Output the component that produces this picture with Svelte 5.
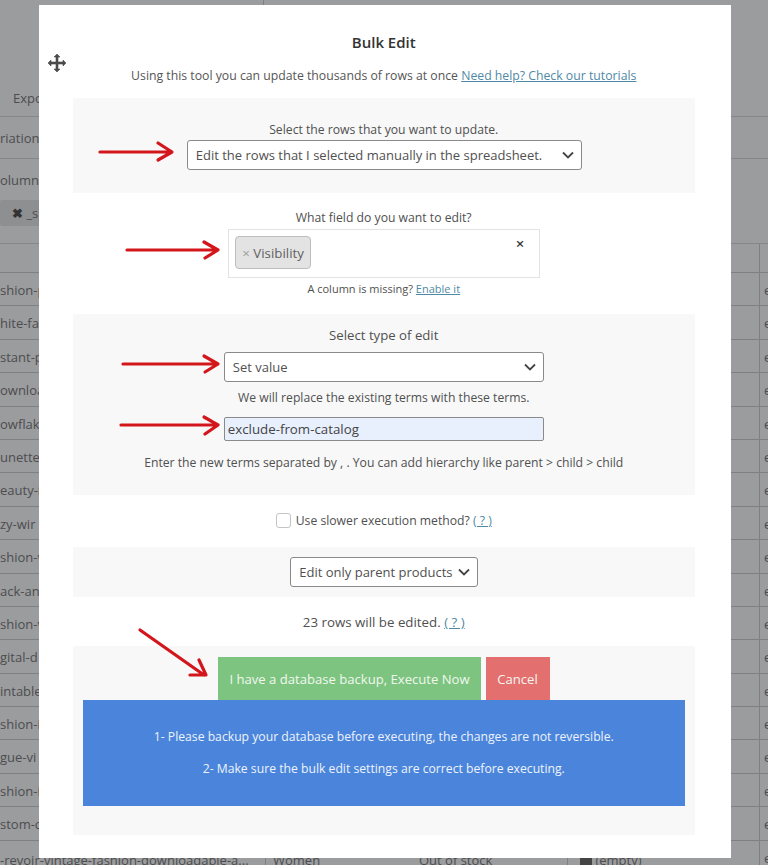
<script>
    const rows = ['shion-p', 'hite-fas', 'stant-p', 'ownloa', 'owflak', 'unette', 'eauty-i', 'zy-wir', 'shion-v', 'ack-an', 'shion-v', 'gital-d', 'intable', 'shion-i', 'gue-vi', 'shion-i', 'stom-c'];
</script>

<div class="page">
    <!-- spreadsheet behind the dialog -->
    <div class="sheet">
        <div class="top-row"><span class="top-divider"></span></div>
        <div class="toolbar-row"><span>Expo</span></div>
        <div class="toolbar-row short"><span>riation</span></div>
        <div class="toolbar-row columns">
            <span>olumn</span>
            <span class="column-chip"><b>✖</b> _s</span>
        </div>
        <div class="head-row"><span class="name"></span><span class="edit"></span></div>
        {#each rows as row}
            <div class="row"><span class="name">{row}</span><span class="edit">e</span></div>
        {/each}
        <div class="last-row">
            <span class="slug">-revoir-vintage-fashion-downloadable-a...</span>
            <span class="cat">Women</span>
            <span class="stock">Out of stock</span>
            <span class="empty">
                <svg width="12" height="10" viewBox="0 0 12 10"><path d="M0 10V3h4l1-2h7v9z" fill="#444" /></svg>
                (empty)
            </span>
            <span class="edit">e</span>
        </div>
    </div>

    <div class="modal">
        <svg class="move" width="20" height="20" viewBox="0 0 20 20">
            <path d="M10 1l3 3h-2v5h5V7l3 3-3 3v-2h-5v5h2l-3 3-3-3h2v-5H4v2l-3-3 3-3v2h5V4H7z" fill="#4b4b4b" stroke="#4b4b4b" stroke-width=".6" stroke-linejoin="round" />
        </svg>

        <h2>Bulk Edit</h2>
        <p class="intro">Using this tool you can update thousands of rows at once <a href="#help">Need help? Check our tutorials</a></p>

        <section class="first">
            <label for="rows">Select the rows that you want to update.</label>
            <div class="select-wrap rows-select">
                <select id="rows"><option>Edit the rows that I selected manually in the spreadsheet.</option></select>
                <svg viewBox="0 0 12 8"><path d="M1 1.5l5 5 5-5" /></svg>
            </div>
        </section>

        <div class="field">
            <p class="field-label">What field do you want to edit?</p>
            <div class="tag-box">
                <span class="tag"><i>×</i> Visibility</span>
                <span class="clear">×</span>
            </div>
            <p class="missing">A column is missing? <a href="#enable">Enable it</a></p>
        </div>

        <section class="type">
            <label for="edit-type">Select type of edit</label>
            <div class="select-wrap type-select">
                <select id="edit-type"><option>Set value</option></select>
                <svg viewBox="0 0 12 8"><path d="M1 1.5l5 5 5-5" /></svg>
            </div>
            <p class="replace">We will replace the existing terms with these terms.</p>
            <input type="text" value="exclude-from-catalog" />
            <p class="hint">Enter the new terms separated by , . You can add hierarchy like parent &gt; child &gt; child</p>
        </section>

        <div class="slower">
            <input type="checkbox" id="slower" />
            <label for="slower">Use slower execution method? <a href="#slow">( ? )</a></label>
        </div>

        <section class="parents">
            <div class="select-wrap parent-select">
                <select><option>Edit only parent products</option></select>
                <svg viewBox="0 0 12 8"><path d="M1 1.5l5 5 5-5" /></svg>
            </div>
        </section>

        <p class="count">23 rows will be edited. <a href="#rows">( ? )</a></p>

        <section class="actions">
            <div class="buttons">
                <button class="run">I have a database backup, Execute Now</button>
                <button class="cancel">Cancel</button>
            </div>
            <div class="notice">
                <p>1- Please backup your database before executing, the changes are not reversible.</p>
                <p>2- Make sure the bulk edit settings are correct before executing.</p>
            </div>
        </section>
    </div>

    <!-- hand drawn annotations over the screenshot -->
    <svg class="arrows" viewBox="0 0 768 865" width="768" height="865">
        <g fill="none" stroke="#d3161b" stroke-width="3.2" stroke-linecap="round" stroke-linejoin="round">
            <path d="M100 152L171 152M158 143L172 152L158 160" />
            <path d="M127 250L216 250M204 242L218 250L205 258" />
            <path d="M123 364L216 364M204 356L218 364L205 372" />
            <path d="M121 425L216 425M204 417L218 425L205 434" />
            <path d="M140 630L204 675M199 660L206 675L190 675" />
        </g>
    </svg>
</div>

<style>
    :global(body) {
        margin: 0;
        background: #9b9c9e;
    }

    .page {
        position: relative;
        width: 768px;
        height: 865px;
        overflow: hidden;
        font-family: "Open Sans", "Noto Sans", sans-serif;
        font-size: 12.2px;
        color: #505050;
    }

    /* background sheet */
    .sheet {
        background: #9b9c9e;
        color: #4c4d4f;
        font-size: 13px;
    }

    .top-row {
        height: 80px;
    }

    .top-divider {
        display: block;
        width: 1px;
        height: 6px;
        margin-left: 263px;
        background: #7e7f81;
    }

    .toolbar-row {
        display: flex;
        align-items: center;
        height: 36px;
        padding-left: 13px;
        border-bottom: 1px solid #858688;
    }

    .toolbar-row.short {
        height: 41px;
        padding-left: 0;
    }

    .toolbar-row.columns {
        flex-direction: column;
        align-items: flex-start;
        height: 85px;
        padding: 12px 0 0;
        box-sizing: border-box;
    }

    .column-chip {
        margin-top: 11px;
        padding: 4px 14px 4px 12px;
        background: #8e8f91;
        border-radius: 2px;
    }

    .column-chip b {
        color: #333;
    }

    .head-row,
    .row {
        display: flex;
        border-bottom: 1px solid #7f8082;
        box-sizing: border-box;
    }

    .head-row {
        height: 29px;
    }

    .row {
        height: 33.4px;
        align-items: stretch;
    }

    .name {
        flex: 1;
        line-height: 35px;
    }

    .edit {
        width: 4px;
        padding-left: 4px;
        border-left: 1px solid #7f8082;
        line-height: 35px;
    }

    .last-row {
        display: flex;
        height: 30px;
        line-height: 38px;
    }

    .slug {
        width: 265px;
    }

    .cat {
        width: 148px;
        padding-left: 7px;
        box-sizing: border-box;
        border-left: 1px solid #7f8082;
    }

    .stock {
        width: 154px;
        padding-left: 6px;
        box-sizing: border-box;
    }

    .empty {
        flex: 1;
        padding-left: 12px;
        border-left: 1px solid #7f8082;
    }

    /* dialog */
    .modal {
        position: absolute;
        top: 5px;
        left: 38.5px;
        width: 692px;
        height: 853px;
        padding: 0 35.5px 0 34px;
        box-sizing: border-box;
        background: #fff;
        text-align: center;
    }

    .move {
        position: absolute;
        top: 48px;
        left: 8.5px;
    }

    h2 {
        margin: 0;
        padding-top: 27px;
        font-size: 15px;
        line-height: 20px;
        font-weight: 600;
        color: #333;
    }

    p {
        margin: 0;
    }

    a {
        color: #4f8aa5;
        text-decoration: underline;
    }

    .intro {
        margin-top: 15px;
        line-height: 18px;
        font-size: 12.25px;
        color: #555;
    }

    section {
        background: #f8f8f8;
    }

    section label,
    .field-label {
        display: block;
        line-height: 18px;
    }

    .first {
        height: 95px;
        margin-top: 13px;
        padding-top: 23px;
        box-sizing: border-box;
    }

    .select-wrap {
        position: relative;
        margin: 0 auto;
    }

    .select-wrap select {
        display: block;
        width: 100%;
        height: 100%;
        padding: 0 8px;
        appearance: none;
        background: #fff;
        border: 1px solid #8a8a8a;
        border-radius: 3px;
        font: inherit;
        font-size: 13px;
        color: #505050;
    }

    .select-wrap svg {
        position: absolute;
        top: 50%;
        right: 8px;
        width: 12px;
        height: 8px;
        margin-top: -4px;
        fill: none;
        stroke: #444;
        stroke-width: 1.8;
        pointer-events: none;
    }

    .rows-select {
        width: 395px;
        height: 30px;
        margin-top: 1px;
        left: .5px;
    }

    .field {
        padding-top: 16px;
    }

    .field-label {
        margin-bottom: 2px;
    }

    .tag-box {
        position: relative;
        width: 312px;
        height: 49px;
        margin: 0 auto;
        left: .5px;
        padding: 6px;
        box-sizing: border-box;
        border: 1px solid #e3e3e3;
        text-align: left;
    }

    .tag {
        display: inline-block;
        width: 76px;
        height: 33px;
        box-sizing: border-box;
        background: #e3e3e3;
        border: 1px solid #bdbdbd;
        border-radius: 4px;
        padding-left: 6px;
        line-height: 32px;
        font-size: 13.3px;
        color: #606060;
        white-space: nowrap;
    }

    .tag i {
        font-style: normal;
        color: #999;
    }

    .clear {
        position: absolute;
        top: 4px;
        right: 15px;
        font-size: 15px;
        line-height: 18px;
        font-weight: 600;
        color: #333;
    }

    .missing {
        margin-top: 2px;
        line-height: 18px;
        font-size: 11px;
    }

    .type {
        height: 181px;
        margin-top: 16px;
        padding-top: 12px;
        box-sizing: border-box;
    }

    .type label {
        font-size: 13.2px;
    }

    .type-select {
        width: 320px;
        height: 30px;
        margin-top: 8px;
    }

    .replace {
        margin-top: 7px;
        line-height: 18px;
    }

    .type input {
        display: block;
        width: 320px;
        height: 24px;
        margin: 10px auto 0;
        padding: 0 3px;
        box-sizing: border-box;
        background: #e8f0fe;
        border: 1px solid #8a8a8a;
        border-radius: 2px;
        font: inherit;
        font-size: 13.3px;
        color: #444;
    }

    .hint {
        margin-top: 13px;
        line-height: 18px;
    }

    .slower {
        display: flex;
        justify-content: center;
        align-items: center;
        gap: 5px;
        height: 52px;
        padding-bottom: 2px;
        box-sizing: border-box;
    }

    .slower input {
        width: 15px;
        height: 15px;
        margin: 0;
        appearance: none;
        background: #fff;
        border: 1px solid #c4c4c4;
        border-radius: 3px;
    }

    .parents {
        display: flex;
        justify-content: center;
        align-items: center;
        height: 50px;
    }

    .parent-select {
        width: 188px;
        height: 30px;
        margin: 0;
        left: .5px;
    }

    .count {
        height: 49px;
        line-height: 50px;
        font-size: 13.3px;
    }

    .actions {
        height: 189px;
        padding: 11px 10px 0;
        box-sizing: border-box;
    }

    .buttons {
        display: flex;
        gap: 4.5px;
        margin-left: 135.5px;
    }

    button {
        height: 43px;
        padding: 0;
        border: none;
        font: inherit;
        font-size: 13.1px;
        color: #f2f7ef;
    }

    .run {
        width: 263px;
        background: #7cc47f;
    }

    .cancel {
        width: 64px;
        background: #e46f6f;
    }

    .notice {
        display: flex;
        flex-direction: column;
        justify-content: center;
        gap: 14px;
        height: 106px;
        background: #4a85db;
        color: #eef3fb;
        line-height: 18px;
    }

    .arrows {
        position: absolute;
        inset: 0;
        pointer-events: none;
    }
</style>
